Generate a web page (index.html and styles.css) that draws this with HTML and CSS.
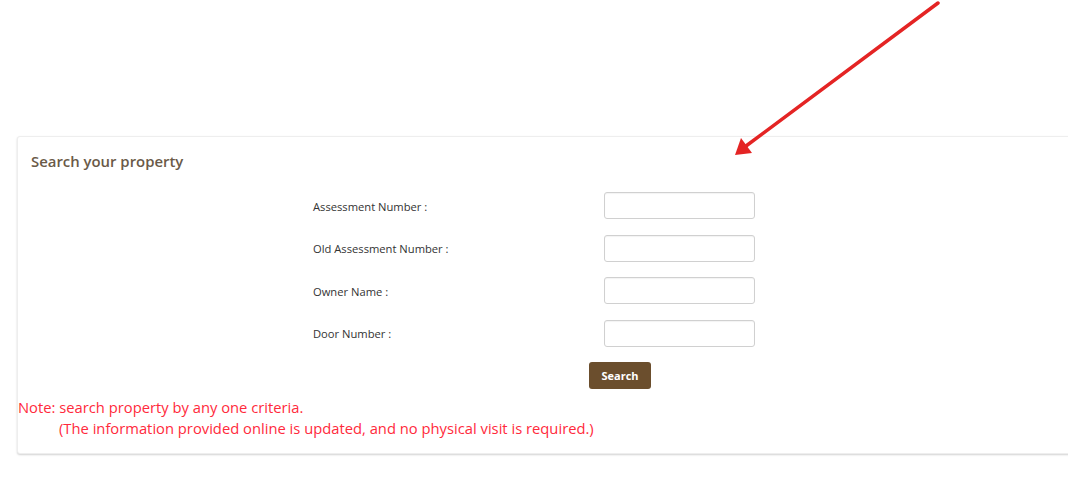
FILE: index.html
```html
<!DOCTYPE html>
<html lang="en">
<head>
<meta charset="utf-8">
<title>Search your property</title>
<link rel="stylesheet" href="styles.css">
</head>
<body>
<div class="page">
  <div class="card">
    <h3 class="card-title">Search your property</h3>
    <form class="search-form">
      <div class="form-row">
        <label class="form-label">Assessment Number :</label>
        <input class="form-input" type="text">
      </div>
      <div class="form-row">
        <label class="form-label">Old Assessment Number :</label>
        <input class="form-input" type="text">
      </div>
      <div class="form-row">
        <label class="form-label">Owner Name :</label>
        <input class="form-input" type="text">
      </div>
      <div class="form-row">
        <label class="form-label">Door Number :</label>
        <input class="form-input" type="text">
      </div>
      <div class="button-row">
        <button class="btn-search" type="button">Search</button>
      </div>
    </form>
    <div class="note">
      <div>Note: search property by any one criteria.</div>
      <div class="note-indent">(The information provided online is updated, and no physical visit is required.)</div>
    </div>
  </div>
  <svg class="arrow" width="1068" height="170" viewBox="0 0 1068 170" aria-hidden="true">
    <line x1="938" y1="3" x2="746" y2="146" stroke="#e42424" stroke-width="3.5" stroke-linecap="round"/>
    <polygon points="735,155 741,138 752,153" fill="#e42424"/>
  </svg>
</div>
</body>
</html>
```

FILE: styles.css
```css
html, body {
  margin: 0;
  padding: 0;
  overflow: hidden;
  background: #fff;
}

body {
  font-family: "Open Sans", "Liberation Sans", sans-serif;
  color: #333;
}

.page {
  position: relative;
  padding: 136px 0 0 17px;
  height: 349px;
}

.card {
  width: 1100px;
  border: 1px solid #eeeeee;
  border-radius: 3px;
  box-shadow: 0 1px 2px rgba(0, 0, 0, 0.18);
  background: #fff;
  padding: 0 0 14px 0;
}

.card-title {
  margin: 0;
  padding: 14px 0 0 13px;
  font-size: 14.9px;
  line-height: 20px;
  font-weight: 600;
  color: #6a5a48;
}

.search-form {
  display: flex;
  flex-direction: column;
  gap: 15.6px;
  margin-top: 21px;
}

.form-row {
  display: grid;
  grid-template-columns: 291px 151px;
  align-items: center;
  margin-left: 295px;
  height: 27px;
}

.form-label {
  font-size: 11.2px;
  color: #333;
  padding-top: 1px;
}

.form-input {
  box-sizing: border-box;
  width: 151px;
  height: 27px;
  border: 1px solid #d0d0d0;
  border-radius: 3px;
  box-shadow: inset 0 1px 1px rgba(0, 0, 0, 0.05);
  margin: 0;
  padding: 0 6px;
}

.button-row {
  margin-left: 571px;
}

.btn-search {
  width: 62px;
  height: 27px;
  border: none;
  border-radius: 3px;
  background: #6b4e2d;
  color: #fff;
  font-family: "Open Sans", "Liberation Sans", sans-serif;
  font-weight: 700;
  font-size: 11px;
  padding: 0;
}

.note {
  margin-top: 8px;
  font-size: 14.75px;
  line-height: 21px;
  color: #ff2a3c;
}

.note-indent {
  padding-left: 41px;
}

.arrow {
  position: absolute;
  top: 0;
  left: 0;
}
```
